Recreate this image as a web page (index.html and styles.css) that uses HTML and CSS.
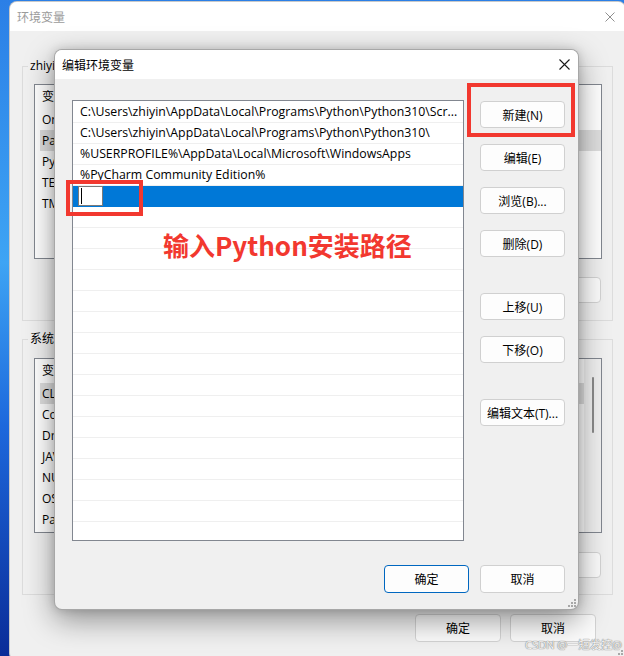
FILE: index.html
```html
<!DOCTYPE html>
<html lang="zh-CN">
<head>
<meta charset="utf-8">
<title>编辑环境变量</title>
<link rel="stylesheet" href="styles.css">
</head>
<body>
<div class="desktop">
  <div class="win back">
    <div class="titlebar">
      <span class="title inactive">环境变量</span>
      <span class="close"><svg width="10" height="10" viewBox="0 0 10 10"><path d="M0.5 0.5L9.5 9.5M9.5 0.5L0.5 9.5" stroke="#8f8f8f" stroke-width="1" fill="none"/></svg></span>
    </div>
    <div class="back-body">
      <div class="group">
        <div class="group-label">zhiyin 的用户变量(U)</div>
        <div class="blist">
          <div class="blist-rows">
            <div class="bhead"><span class="c1">变量</span><span>值</span></div>
            <div class="brow">OneDrive</div>
            <div class="brow sel">Path</div>
            <div class="brow">PyCharm Community Edition</div>
            <div class="brow">TEMP</div>
            <div class="brow">TMP</div>
          </div>
        </div>
        <div class="bbtns">
          <span class="bbtn">新建(N)...</span>
          <span class="bbtn">编辑(E)...</span>
          <span class="bbtn">删除(D)</span>
        </div>
      </div>
      <div class="group g2">
        <div class="group-label">系统变量(S)</div>
        <div class="blist">
          <div class="blist-rows">
            <div class="bhead"><span class="c1">变量</span><span>值</span></div>
            <div class="brow sel">CLASSPATH</div>
            <div class="brow">ComSpec</div>
            <div class="brow">DriverData</div>
            <div class="brow">JAVA_HOME</div>
            <div class="brow">NUMBER_OF_PROCESSORS</div>
            <div class="brow">OS</div>
            <div class="brow">Path</div>
          </div>
          <div class="vscroll"><span class="vthumb"></span></div>
        </div>
        <div class="bbtns">
          <span class="bbtn">新建(W)...</span>
          <span class="bbtn">编辑(I)...</span>
          <span class="bbtn">删除(L)</span>
        </div>
      </div>
      <div class="bfoot">
        <span class="bbtn wide">确定</span>
        <span class="bbtn wide">取消</span>
      </div>
    </div>
    <svg class="grip" width="9" height="9" viewBox="0 0 9 9"><rect x="6" y="0" width="2" height="2"/><rect x="3" y="3" width="2" height="2"/><rect x="6" y="3" width="2" height="2"/><rect x="0" y="6" width="2" height="2"/><rect x="3" y="6" width="2" height="2"/><rect x="6" y="6" width="2" height="2"/></svg>
  </div>

  <div class="win dialog">
    <div class="titlebar">
      <span class="title">编辑环境变量</span>
      <span class="dclose"><svg width="11" height="11" viewBox="0 0 11 11"><path d="M0.5 0.5L10.5 10.5M10.5 0.5L0.5 10.5" stroke="#1a1a1a" stroke-width="1.1" fill="none"/></svg></span>
    </div>
    <div class="dbody">
      <div class="dmain">
        <div class="plist">
          <div class="prow">C:\Users\zhiyin\AppData\Local\Programs\Python\Python310\Scr...</div>
          <div class="prow">C:\Users\zhiyin\AppData\Local\Programs\Python\Python310\</div>
          <div class="prow">%USERPROFILE%\AppData\Local\Microsoft\WindowsApps</div>
          <div class="prow">%PyCharm Community Edition%</div>
          <div class="prow sel"><span class="edit"><span class="caret"></span></span></div>
          <div class="prow"></div>
          <div class="prow"></div>
          <div class="prow"></div>
          <div class="prow"></div>
          <div class="prow"></div>
          <div class="prow"></div>
          <div class="prow"></div>
          <div class="prow"></div>
          <div class="prow"></div>
          <div class="prow"></div>
          <div class="prow"></div>
          <div class="prow"></div>
          <div class="prow"></div>
          <div class="prow"></div>
          <div class="prow"></div>
          <div class="prow"></div>
        </div>
        <div class="side">
          <div class="btn">新建(N)</div>
          <div class="btn">编辑(E)</div>
          <div class="btn">浏览(B)...</div>
          <div class="btn">删除(D)</div>
          <div class="btn sp">上移(U)</div>
          <div class="btn">下移(O)</div>
          <div class="btn sp">编辑文本(T)...</div>
        </div>
      </div>
      <div class="dfoot">
        <div class="btn primary">确定</div>
        <div class="btn">取消</div>
      </div>
    </div>
    <svg class="grip" width="9" height="9" viewBox="0 0 9 9"><rect x="6" y="0" width="2" height="2"/><rect x="3" y="3" width="2" height="2"/><rect x="6" y="3" width="2" height="2"/><rect x="0" y="6" width="2" height="2"/><rect x="3" y="6" width="2" height="2"/><rect x="6" y="6" width="2" height="2"/></svg>
  </div>

  <div class="redbox rb1"></div>
  <div class="redbox rb2"></div>
  <div class="note">输入Python安装路径</div>
  <div class="wm">CSDN @一短发控@</div>
</div>
</body>
</html>
```

FILE: styles.css
```css
* { box-sizing: border-box; }
html, body { margin: 0; padding: 0; }
body {
  width: 624px;
  height: 656px;
  overflow: hidden;
  font-family: "Open Sans", "Noto Sans CJK SC", sans-serif;
  font-size: 12px;
  color: #000;
}
.desktop {
  position: relative;
  width: 624px;
  height: 656px;
  overflow: hidden;
  background: linear-gradient(180deg, #2b7fe6 0%, #3ea4f4 40%, #1d68dc 65%, #0a2c98 100%);
}
.win {
  position: absolute;
  background: #f0f0f0;
  border-radius: 8px;
  overflow: hidden;
}
.back {
  left: 9px;
  top: 1px;
  width: 617px;
  height: 660px;
  border: 1px solid rgba(0, 0, 0, 0.16);
}
.titlebar {
  display: flex;
  align-items: center;
  height: 29px;
  background: #fff;
}
.title {
  flex: 1;
  padding-left: 7px;
  font-family: "Noto Sans CJK SC", sans-serif;
  font-size: 12px;
}
.inactive { color: #9b9b9b; }
.close {
  width: 30px;
  height: 29px;
  display: flex;
  align-items: center;
  justify-content: center;
}
.back-body { padding: 0 12px; }
.group {
  margin-top: 35px;
  border: 1px solid #dcdcdc;
  padding: 0 10px 17px 11px;
}
.g2 { margin-top: 18px; padding-bottom: 16px; }
.group-label {
  margin: -9px 0 0 -6px;
  width: fit-content;
  padding: 0 2px;
  line-height: 16px;
  background: #f0f0f0;
}
.blist {
  margin-top: 10px;
  height: 175px;
  border: 1px solid #828790;
  background: #fff;
  display: flex;
  overflow: hidden;
}
.g2 .blist { margin-top: 11px; }
.blist-rows { flex: 1; }
.bhead {
  display: flex;
  height: 24px;
  line-height: 24px;
  padding-left: 7px;
}
.bhead .c1 { width: 200px; }
.brow {
  height: 21px;
  line-height: 21px;
  margin-left: 5px;
  padding-left: 2px;
  white-space: nowrap;
}
.brow.sel { background: #dedede; }
.vscroll {
  width: 17px;
  background: #f0f0f0;
  display: flex;
  justify-content: center;
}
.vthumb {
  width: 2px;
  height: 56px;
  margin-top: 18px;
  background: #8a8a8a;
  border-radius: 1px;
}
.bbtns {
  display: flex;
  justify-content: flex-end;
  gap: 9px;
  margin-top: 18px;
  padding-right: 1px;
}
.g2 .bbtns { margin-top: 19px; }
.bbtn {
  width: 85px;
  height: 26px;
  display: flex;
  align-items: center;
  justify-content: center;
  background: #fbfbfb;
  border: 1px solid #d3d3d3;
  border-radius: 4px;
}
.bfoot {
  display: flex;
  justify-content: flex-end;
  gap: 9px;
  margin-top: 19px;
  padding-right: 17px;
}
.bbtn.wide { width: 86px; height: 28px; }
.grip {
  position: absolute;
  right: 1px;
  bottom: 1px;
  fill: #a8a8a8;
}

.dialog {
  left: 54px;
  top: 49px;
  width: 525px;
  height: 561px;
  border: 1px solid rgba(0, 0, 0, 0.3);
  box-shadow: 0 10px 30px rgba(0, 0, 0, 0.4), 0 0 10px rgba(0, 0, 0, 0.15);
}
.dclose {
  width: 28px;
  height: 29px;
  display: flex;
  align-items: center;
  justify-content: center;
}
.dbody { padding: 21px 13px 0 17px; }
.dmain { display: flex; gap: 16px; }
.plist {
  width: 392px;
  height: 441px;
  border: 1px solid #828790;
  background: #fff;
  padding-top: 1px;
  overflow: hidden;
}
.prow {
  height: 21px;
  border-bottom: 1px solid #efefef;
  padding-left: 7px;
  font-size: 12.3px;
  line-height: 20px;
  white-space: nowrap;
  overflow: hidden;
}
.prow.sel {
  display: flex;
  align-items: center;
  padding-left: 5px;
  background: #0078d7;
  border-bottom-color: #0078d7;
}
.edit {
  display: flex;
  align-items: center;
  width: 25px;
  height: 20px;
  padding-left: 2px;
  border: 1px solid #7a7a7a;
  background: #fff;
}
.caret { width: 1px; height: 16px; background: #000; }
.side {
  width: 85px;
  display: flex;
  flex-direction: column;
  gap: 16px;
  padding-top: 1px;
}
.side .sp { margin-top: 20px; }
.btn {
  height: 27px;
  display: flex;
  align-items: center;
  justify-content: center;
  background: #fdfdfd;
  border: 1px solid #d0d0d0;
  border-radius: 4px;
}
.dfoot {
  display: flex;
  justify-content: flex-end;
  gap: 11px;
  margin-top: 24px;
}
.dfoot .btn { width: 85px; height: 28px; }
.btn.primary { border-color: #0067c0; }

.redbox {
  position: absolute;
  border: 4px solid #f2382f;
}
.rb1 { left: 467px; top: 83px; width: 108px; height: 54px; }
.rb2 { left: 66px; top: 180px; width: 77px; height: 36px; }
.note {
  position: absolute;
  left: 163px;
  top: 229px;
  font-family: "Noto Sans CJK SC", sans-serif;
  font-weight: bold;
  font-size: 26px;
  line-height: 32px;
  color: #f2382f;
  white-space: nowrap;
}
.wm {
  position: absolute;
  left: 525px;
  top: 636px;
  font-family: "Open Sans", "Noto Sans CJK SC", sans-serif;
  font-size: 11.5px;
  letter-spacing: -0.3px;
  color: #f2f2f2;
  text-shadow: 0 0 1px #707070, 0 0 1px #909090;
  white-space: nowrap;
}
```
